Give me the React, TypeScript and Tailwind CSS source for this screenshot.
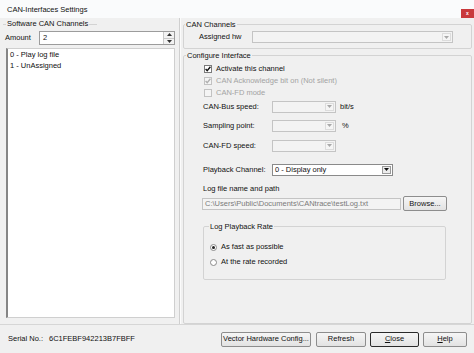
import React from 'react';

const Arrow = ({ color = '#9a9a9a' }: { color?: string }) => (
  <svg width="5" height="3" viewBox="0 0 5 3">
    <path d="M0 0h5L2.5 3z" fill={color} />
  </svg>
);

function Combo({ width, value, enabled = false }: { width: string; value?: string; enabled?: boolean }) {
  return (
    <div
      className={`flex h-[12px] items-stretch border ${width} ${
        enabled ? 'border-[#8a8a8a] bg-white' : 'border-[#c4c4c4] bg-[#f3f3f3]'
      }`}
    >
      <div className="flex flex-1 items-center pl-[2px]">{value}</div>
      <div
        className={`m-[1px] flex w-[9px] items-center justify-center border ${
          enabled ? 'border-[#9a9a9a] bg-[#ececec]' : 'border-[#dcdcdc] bg-[#f5f5f5]'
        }`}
      >
        <Arrow color={enabled ? '#111' : '#a8a8a8'} />
      </div>
    </div>
  );
}

function Check({ label, checked, disabled }: { label: string; checked?: boolean; disabled?: boolean }) {
  return (
    <div className="flex h-[12px] items-center pl-[20px]">
      <div
        className={`flex h-[8px] w-[8px] items-center justify-center border ${
          disabled ? 'border-[#c2c2c2] bg-[#f4f4f4]' : 'border-[#7b7b7b] bg-white'
        }`}
      >
        {checked && (
          <svg width="6" height="6" viewBox="0 0 6 6">
            <path d="M0.6 3l1.6 1.7L5.4 0.8" stroke={disabled ? '#b0b0b0' : '#111'} strokeWidth="1.4" fill="none" />
          </svg>
        )}
      </div>
      <span className={`ml-[4px] ${disabled ? 'text-[#a3a3a3]' : ''}`}>{label}</span>
    </div>
  );
}

function Radio({ label, checked }: { label: string; checked?: boolean }) {
  return (
    <div className="flex h-[12px] items-center pl-[6px]">
      <div className="flex h-[7px] w-[7px] items-center justify-center rounded-full border border-[#8a8a8a] bg-white">
        {checked && <div className="h-[3px] w-[3px] rounded-full bg-[#222]" />}
      </div>
      <span className="ml-[4px]">{label}</span>
    </div>
  );
}

function Btn({ children, width, isDefault }: { children: React.ReactNode; width: string; isDefault?: boolean }) {
  return (
    <div
      className={`flex h-[15px] items-center justify-center rounded-[2px] bg-gradient-to-b from-[#f6f6f6] to-[#e2e2e2] ${width} ${
        isDefault ? 'border-[1.5px] border-[#2a2a2a]' : 'border border-[#8d8d8d]'
      }`}
    >
      {children}
    </div>
  );
}

function Row({ label, children, mt }: { label: string; children: React.ReactNode; mt: string }) {
  return (
    <div className={`flex h-[13px] items-center pl-[19px] ${mt}`}>
      <span className="w-[69px]">{label}</span>
      {children}
    </div>
  );
}

export default function App() {
  return (
    <div className="flex h-[353px] w-[474px] flex-col overflow-hidden bg-[#f0f0f0] font-['Liberation_Sans',Arial,sans-serif] text-[7.5px] leading-none text-[#111]">
      {/* title bar */}
      <div className="flex h-[18px] bg-[#fafbfc]">
        <span className="ml-[7px] mt-[6px]">CAN-Interfaces Settings</span>
        <div className="ml-auto mt-[9px] flex h-[9px] w-[13px] items-center justify-center bg-[#c9393c] text-[5px] font-bold text-white">
          x
        </div>
      </div>

      {/* body */}
      <div className="flex h-[307px] border-b border-[#d6d6d6]">
        {/* left */}
        <div className="flex w-[180px] flex-col border-r border-[#cfcfcf]">
          <div className="flex h-[12px] items-center">
            <div className="ml-[3px] h-px w-[3px] bg-[#d3d3d3]" />
            <span className="px-[1px]">Software CAN Channels</span>
            <div className="h-px w-[8px] bg-[#d3d3d3]" />
          </div>
          <div className="mt-[1px] flex h-[14px] items-center">
            <span className="w-[39px] pl-[5px]">Amount</span>
            <div className="flex h-[14px] w-[136px] border border-[#9c9c9c] bg-white">
              <span className="flex flex-1 items-center pl-[3px]">2</span>
              <div className="flex w-[11px] flex-col border-l border-[#c8c8c8]">
                <div className="flex flex-1 items-center justify-center border-b border-[#c8c8c8] bg-[#f2f2f2]">
                  <svg width="5" height="3" viewBox="0 0 5 3">
                    <path d="M0 3h5L2.5 0z" fill="#333" />
                  </svg>
                </div>
                <div className="flex flex-1 items-center justify-center bg-[#f2f2f2]">
                  <Arrow color="#333" />
                </div>
              </div>
            </div>
          </div>
          <div className="ml-[6px] mt-[3px] h-[270px] w-[169px] border border-l-2 border-[#cfcfcf] border-l-[#858585] bg-white">
            <div className="h-[11px] pl-[2px] leading-[11px]">0 - Play log file</div>
            <div className="h-[11px] pl-[2px] leading-[11px]">1 - UnAssigned</div>
          </div>
        </div>

        {/* right */}
        <div className="flex flex-1 flex-col border-l border-[#fbfbfb] pl-[2px]">
          <fieldset className="mt-[2px] h-[29px] w-[289px] rounded-[2px] border border-[#d3d3d3]">
            <legend className="ml-[1px] px-[1px] leading-[9px]">CAN Channels</legend>
            <div className="mt-[1px] flex h-[14px] items-center pl-[15px]">
              <span className="w-[53px]">Assigned hw</span>
              <Combo width="w-[201px]" />
            </div>
          </fieldset>

          <fieldset className="mt-[2px] h-[273px] w-[289px] rounded-[2px] border border-[#d3d3d3]">
            <legend className="ml-[2px] px-[1px] leading-[9px]">Configure Interface</legend>
            <div className="mt-[3px]">
              <Check label="Activate this channel" checked />
              <Check label="CAN Acknowledge bit on (Not silent)" checked disabled />
              <Check label="CAN-FD mode" disabled />
            </div>
            <Row label="CAN-Bus speed:" mt="mt-[1px]">
              <Combo width="w-[64px]" />
              <span className="ml-[4px]">bit/s</span>
            </Row>
            <Row label="Sampling point:" mt="mt-[6px]">
              <Combo width="w-[64px]" />
              <span className="ml-[6px]">%</span>
            </Row>
            <Row label="CAN-FD speed:" mt="mt-[7px]">
              <Combo width="w-[64px]" />
            </Row>
            <Row label="Playback Channel:" mt="mt-[11px]">
              <Combo width="w-[121px]" value="0 - Display only" enabled />
            </Row>
            <div className="mt-[8px] flex h-[10px] items-center pl-[19px]">Log file name and path</div>
            <div className="mt-[2px] flex h-[15px] items-center pl-[18px]">
              <div className="flex h-[12px] w-[199px] items-center border border-[#c4c4c4] bg-[#f3f3f3] pl-[2px] text-[#7a7a7a]">
                C:\Users\Public\Documents\CANtrace\testLog.txt
              </div>
              <div className="ml-[2px]">
                <Btn width="w-[44px]">Browse...</Btn>
              </div>
            </div>
            <fieldset className="ml-[19px] mt-[11px] h-[58px] w-[243px] rounded-[2px] border border-[#d3d3d3]">
              <legend className="ml-[5px] px-[1px] leading-[9px]">Log Playback Rate</legend>
              <div className="mt-[10px]">
                <Radio label="As fast as possible" checked />
              </div>
              <div className="mt-[3px]">
                <Radio label="At the rate recorded" />
              </div>
            </fieldset>
          </fieldset>
        </div>
      </div>

      {/* footer */}
      <div className="flex h-[28px] items-center">
        <span className="ml-[8px]">Serial No.:</span>
        <span className="ml-[6px]">6C1FEBF942213B7FBFF</span>
        <div className="ml-auto mr-[7px] flex items-center">
          <Btn width="w-[90px]">Vector Hardware Config...</Btn>
          <div className="ml-[5px]">
            <Btn width="w-[50px]">Refresh</Btn>
          </div>
          <div className="ml-[4px]">
            <Btn width="w-[49px]" isDefault>
              <span className="underline underline-offset-1">C</span>lose
            </Btn>
          </div>
          <div className="ml-[4px]">
            <Btn width="w-[44px]">
              <span className="underline underline-offset-1">H</span>elp
            </Btn>
          </div>
        </div>
      </div>
    </div>
  );
}
